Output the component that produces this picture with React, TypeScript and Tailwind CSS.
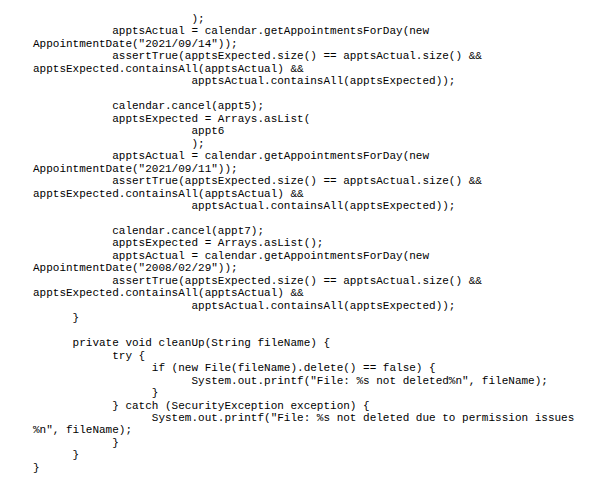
const lines: [number, string][] = [
  [4, ");"],
  [2, "apptsActual = calendar.getAppointmentsForDay(new"],
  [0, 'AppointmentDate("2021/09/14"));'],
  [2, "assertTrue(apptsExpected.size() == apptsActual.size() &&"],
  [0, "apptsExpected.containsAll(apptsActual) &&"],
  [4, "apptsActual.containsAll(apptsExpected));"],
  [0, ""],
  [2, "calendar.cancel(appt5);"],
  [2, "apptsExpected = Arrays.asList("],
  [4, "appt6"],
  [4, ");"],
  [2, "apptsActual = calendar.getAppointmentsForDay(new"],
  [0, 'AppointmentDate("2021/09/11"));'],
  [2, "assertTrue(apptsExpected.size() == apptsActual.size() &&"],
  [0, "apptsExpected.containsAll(apptsActual) &&"],
  [4, "apptsActual.containsAll(apptsExpected));"],
  [0, ""],
  [2, "calendar.cancel(appt7);"],
  [2, "apptsExpected = Arrays.asList();"],
  [2, "apptsActual = calendar.getAppointmentsForDay(new"],
  [0, 'AppointmentDate("2008/02/29"));'],
  [2, "assertTrue(apptsExpected.size() == apptsActual.size() &&"],
  [0, "apptsExpected.containsAll(apptsActual) &&"],
  [4, "apptsActual.containsAll(apptsExpected));"],
  [1, "}"],
  [0, ""],
  [1, "private void cleanUp(String fileName) {"],
  [2, "try {"],
  [3, "if (new File(fileName).delete() == false) {"],
  [4, 'System.out.printf("File: %s not deleted%n", fileName);'],
  [3, "}"],
  [2, "} catch (SecurityException exception) {"],
  [3, 'System.out.printf("File: %s not deleted due to permission issues'],
  [0, '%n", fileName);'],
  [2, "}"],
  [1, "}"],
  [0, "}"],
];

export default function App() {
  return (
    <div className="w-[595px] h-[486px] bg-white overflow-hidden">
      <pre className="pl-[33px] pt-[13px] font-['Liberation_Mono',monospace] text-[11px] leading-[12.47px] text-black">
        {lines.map(([lvl, text], i) => (
          <div key={i} className="h-[12.47px] whitespace-pre">
            {" ".repeat(lvl * 6) + text}
          </div>
        ))}
      </pre>
    </div>
  );
}
